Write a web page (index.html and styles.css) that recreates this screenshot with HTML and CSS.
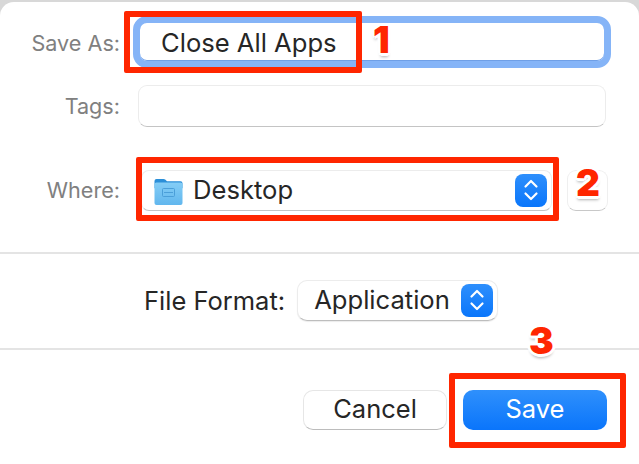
FILE: index.html
```html
<!DOCTYPE html>
<html lang="en">
<head>
  <meta charset="UTF-8">
  <title>Save As</title>
  <link rel="stylesheet" href="styles.css">
</head>
<body>
  <div class="dialog">
    <div class="names">
      <div class="row row-save">
        <span class="label">Save As:</span>
        <div class="name-field">Close All Apps</div>
      </div>
      <div class="row row-tags">
        <span class="label">Tags:</span>
        <div class="tags-field"></div>
      </div>
      <div class="row row-where">
        <span class="label">Where:</span>
        <div class="where-select">
          <svg class="folder" width="29" height="28" viewBox="0 0 29 28">
            <defs>
              <linearGradient id="folderFront" x1="0" y1="0" x2="0" y2="1">
                <stop offset="0" stop-color="#84cdf6"/>
                <stop offset="1" stop-color="#62b7ee"/>
              </linearGradient>
            </defs>
            <path d="M0.500 3 a2 2 0 0 1 2-2 h7 a3 3 0 0 1 2 0.800 l1.500 1.400 h13.500 a2 2 0 0 1 2 2 v5 h-28z" fill="#2b8fd8"/>
            <rect x="0.500" y="4.500" width="28" height="22.500" rx="2" fill="url(#folderFront)"/>
            <rect x="8.500" y="10.500" width="12" height="8" rx="1" fill="none" stroke="#4b9fd9" stroke-width="1"/>
            <path d="M10 14.500 h9" stroke="#4b9fd9" stroke-width="1"/>
          </svg>
          <span class="select-text where-text">Desktop</span>
          <span class="stepper stepper-where">
            <svg width="20" height="26" viewBox="0 0 20 26"><path d="M4.500 9.500 L10 4 L15.500 9.500 M4.500 16.500 L10 22 L15.500 16.500" fill="none" stroke="#fff" stroke-width="2.200" stroke-linecap="round" stroke-linejoin="round"/></svg>
          </span>
        </div>
        <div class="expand-button"></div>
      </div>
    </div>

    <div class="format">
      <span class="format-label">File Format:</span>
      <div class="format-select">
        <span class="select-text format-text">Application</span>
        <span class="stepper stepper-format">
          <svg width="20" height="26" viewBox="0 0 20 26"><path d="M4.500 9.500 L10 4 L15.500 9.500 M4.500 16.500 L10 22 L15.500 16.500" fill="none" stroke="#fff" stroke-width="2.200" stroke-linecap="round" stroke-linejoin="round"/></svg>
        </span>
      </div>
    </div>

    <div class="actions">
      <button class="btn btn-cancel">Cancel</button>
      <button class="btn btn-save">Save</button>
    </div>

    <!-- red callouts drawn over the dialog -->
    <div class="callout box-1"></div>
    <div class="callout box-2"></div>
    <div class="callout box-3"></div>
    <span class="num num-1">1</span>
    <span class="num num-2">2</span>
    <span class="num num-3">3</span>
  </div>
</body>
</html>
```

FILE: styles.css
```css
* {
  box-sizing: border-box;
}
html, body {
  margin: 0;
  height: 100%;
}
body {
  width: 639px;
  height: 464px;
  overflow: hidden;
  background: #d8d8d8;
  font-family: Inter, "Liberation Sans", sans-serif;
  color: #262626;
}
.dialog {
  position: relative;
  height: 462px;
  margin-top: 2px;
  background: #fff;
  border-radius: 14px 14px 0 0;
}
.names {
  height: 252px;
  padding-top: 14px;
  border-bottom: 2px solid #e4e4e4;
}
.row {
  display: flex;
  align-items: center;
}
.label {
  width: 120px;
  text-align: right;
  font-size: 21.600px;
  color: #808080;
}
.row-save {
  height: 52px;
}
.row-save .label {
  padding-top: 2px;
}
.name-field {
  width: 478px;
  height: 52px;
  margin-left: 13px;
  padding: 0 0 0 21px;
  display: flex;
  align-items: center;
  font-size: 25.600px;
  background: #fff;
  border: 7px solid #85b4f7;
  border-radius: 14px;
  box-shadow: inset 0 -1px 0 #6f9fe6;
}
.row-tags {
  margin-top: 17px;
  height: 42px;
}
.tags-field {
  width: 468px;
  height: 42px;
  margin-left: 18px;
  background: #fff;
  border: 1px solid #ececec;
  border-bottom-color: #c4c4c4;
  border-radius: 9px;
}
.row-where {
  margin-top: 42px;
  height: 42px;
}
.where-select {
  width: 411px;
  height: 41px;
  margin-left: 21px;
  padding: 0 4px 0 12px;
  display: flex;
  align-items: center;
  background: #fff;
  border: 1px solid #ececec;
  border-bottom-color: #c4c4c4;
  border-radius: 8px;
}
.folder {
  flex: none;
  margin-top: 3px;
}
.select-text {
  font-size: 25.600px;
}
.where-text {
  margin-left: 10px;
  padding-bottom: 2px;
}
.format-text {
  margin-left: 8px;
  padding-bottom: 2px;
}
.stepper {
  margin-left: auto;
  width: 32px;
  height: 33px;
  flex: none;
  display: flex;
  align-items: center;
  justify-content: center;
  background: linear-gradient(#2e8ffc, #0a76fb);
  border-radius: 8px;
}
.expand-button {
  width: 41px;
  height: 41px;
  margin-left: 15px;
  background: #fff;
  border: 1px solid #efefef;
  border-bottom-color: #c8c8c8;
  border-radius: 9px;
}
.format {
  height: 96px;
  padding: 0 0 2px 144px;
  display: flex;
  align-items: center;
  border-bottom: 2px solid #e4e4e4;
}
.format-label {
  font-size: 25.500px;
}
.format-select {
  width: 201px;
  height: 41px;
  margin-left: 12px;
  padding: 0 4px 0 8px;
  display: flex;
  align-items: center;
  background: #fff;
  border: 1px solid #ececec;
  border-bottom-color: #bdbdbd;
  border-radius: 10px;
  box-shadow: 0 1px 1px rgba(0, 0, 0, 0.08);
}
.actions {
  padding: 40px 32px 0 0;
  display: flex;
  justify-content: flex-end;
  gap: 16px;
}
.btn {
  width: 144px;
  height: 40px;
  padding: 0 0 3px;
  font: 25.500px Inter, "Liberation Sans", sans-serif;
  border-radius: 10px;
}
.btn-cancel {
  color: #262626;
  background: #fff;
  border: 1px solid #e6e6e6;
  border-bottom-color: #bcbcbc;
}
.btn-save {
  color: #fff;
  background: linear-gradient(#2f90fc, #0a75fb);
  border: none;
}
.callout {
  position: absolute;
  border: 6px solid #ff2600;
  border-radius: 2px;
}
.box-1 {
  left: 124px;
  top: 9px;
  width: 238px;
  height: 62px;
}
.box-2 {
  left: 136px;
  top: 155px;
  width: 423px;
  height: 64px;
}
.box-3 {
  left: 449px;
  top: 371px;
  width: 177px;
  height: 75px;
}
.num {
  position: absolute;
  font: 900 37px Inter, "Liberation Sans", sans-serif;
  line-height: 1;
  color: #ff2600;
  text-shadow: 3px 0 #fff, -3px 0 #fff, 0 3px #fff, 0 -3px #fff, 2px 2px #fff, -2px 2px #fff, 2px -2px #fff, -2px -2px #fff, 0 4px 3px rgba(0, 0, 0, 0.3);
}
.num-1 {
  left: 373px;
  top: 19px;
}
.num-2 {
  left: 576px;
  top: 162px;
}
.num-3 {
  left: 529px;
  top: 320px;
}
```
